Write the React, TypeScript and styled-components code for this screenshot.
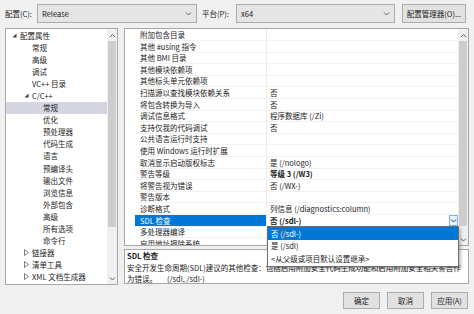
import React from 'react';
import styled, { createGlobalStyle } from 'styled-components';

const GlobalStyle = createGlobalStyle`
  html, body {
    margin: 0;
    padding: 0;
  }
  body {
    background: #f0f0f0;
    font-family: "Noto Sans CJK SC", "Noto Sans", sans-serif;
    font-size: 7.5px;
    color: #1b1b1b;
  }
`;

const Dialog = styled.div`
  width: 474px;
  height: 314px;
  overflow: hidden;
  display: flex;
  flex-direction: column;
  background: #f0f0f0;
`;

const TopBar = styled.div`
  display: flex;
  align-items: center;
  height: 19px;
  padding: 4px 0 0 5px;
`;

const FieldLabel = styled.span<{ $width: number; $gap?: number }>`
  width: ${p => p.$width}px;
  margin-left: ${p => p.$gap || 0}px;
  white-space: nowrap;
`;

const Combo = styled.div<{ $width: number }>`
  box-sizing: border-box;
  width: ${p => p.$width}px;
  height: 19px;
  background: #e5e5e5;
  border: 1px solid #acacac;
  display: flex;
  align-items: center;
  justify-content: space-between;
  padding: 0 4px 0 4px;
`;

const ToolButton = styled.button<{ $width: number; $gap?: number }>`
  box-sizing: border-box;
  width: ${p => p.$width}px;
  height: ${p => (p.$gap ? 19 : 17)}px;
  margin-left: ${p => p.$gap || 0}px;
  padding: 0;
  background: #e1e1e1;
  border: 1px solid #adadad;
  font: inherit;
  color: #1b1b1b;
  white-space: nowrap;
`;

const Main = styled.div`
  display: flex;
  gap: 6px;
  height: 257px;
  padding: 5px 5px 0 5px;
`;

const TreePanel = styled.div`
  box-sizing: border-box;
  width: 113px;
  height: 257px;
  border: 1px solid #a7a7a7;
  background: #fff;
  display: flex;
`;

const TreeList = styled.div`
  flex: 1;
  overflow: hidden;
`;

const TreeRow = styled.div<{ $indent: number; $selected?: boolean }>`
  height: 12.1px;
  display: flex;
  align-items: center;
  padding-left: ${p => p.$indent}px;
  background: ${p => (p.$selected ? '#d6d6e2' : 'transparent')};
  white-space: nowrap;
`;

const Expander = styled.span`
  width: 8px;
  display: flex;
  align-items: center;
`;

const ScrollTrack = styled.div`
  width: 10px;
  background: #f0f0f0;
  display: flex;
  flex-direction: column;
  align-items: center;
`;

const ScrollArrow = styled.div`
  width: 10px;
  height: 12px;
  display: flex;
  align-items: center;
  justify-content: center;
`;

const ScrollThumb = styled.div<{ $size: number }>`
  width: 8px;
  height: ${p => p.$size}px;
  background: #cdcdcd;
`;

const Spacer = styled.div`
  flex: 1;
`;

const RightCol = styled.div`
  position: relative;
  width: 345px;
  display: flex;
  flex-direction: column;
  gap: 3px;
`;

const GridPanel = styled.div`
  box-sizing: border-box;
  height: 218px;
  border: 1px solid #a7a7a7;
  background: #fff;
  display: flex;
`;

const GridBody = styled.div`
  flex: 1;
  overflow: hidden;
`;

const GridRow = styled.div`
  display: grid;
  grid-template-columns: 10px 132px 1fr;
  height: 11.6px;
`;

const Gutter = styled.div`
  background: #fff;
`;

const NameCell = styled.div<{ $selected?: boolean }>`
  box-sizing: border-box;
  padding-left: 5px;
  display: flex;
  align-items: center;
  white-space: nowrap;
  border-bottom: 1px solid #f2f2f2;
  border-right: 1px solid #ececec;
  background: ${p => (p.$selected ? '#0078d7' : 'transparent')};
  color: ${p => (p.$selected ? '#fff' : 'inherit')};
`;

const ValueCell = styled.div<{ $bold?: boolean }>`
  box-sizing: border-box;
  padding-left: 3px;
  display: flex;
  align-items: center;
  justify-content: space-between;
  white-space: nowrap;
  border-bottom: 1px solid #f2f2f2;
  font-weight: ${p => (p.$bold ? 700 : 400)};
`;

const DropButton = styled.div`
  box-sizing: border-box;
  width: 9px;
  height: 11px;
  border: 1px solid #7eb4ea;
  background: #e5f1fb;
  display: flex;
  align-items: center;
  justify-content: center;
`;

const DescPanel = styled.div`
  box-sizing: border-box;
  height: 35px;
  border: 1px solid #a7a7a7;
  background: #fff;
  padding: 0 0 0 2px;
  overflow: hidden;
  white-space: nowrap;
`;

const DescTitle = styled.div`
  font-weight: 700;
  line-height: 12px;
  margin-bottom: 1px;
`;

const DescLine = styled.div`
  line-height: 10.5px;
`;

const Switch = styled.span`
  margin-left: 10px;
`;

const DropList = styled.div`
  position: absolute;
  left: 143px;
  top: 198px;
  box-sizing: border-box;
  width: 192px;
  height: 41px;
  background: #fff;
  border: 1px solid #6e6e6e;
  box-shadow: 2px 2px 3px rgba(0, 0, 0, 0.25);
  z-index: 2;
`;

const DropItem = styled.div<{ $active?: boolean }>`
  height: 12.5px;
  display: flex;
  align-items: center;
  padding-left: 3px;
  background: ${p => (p.$active ? '#0078d7' : 'transparent')};
  color: ${p => (p.$active ? '#fff' : 'inherit')};
  white-space: nowrap;
`;

const Footer = styled.div`
  display: flex;
  justify-content: flex-end;
  gap: 7px;
  padding: 7px 6px 0 0;
`;

const Chevron = ({ up, color = '#606060' }: { up?: boolean; color?: string }) => (
  <svg width="7" height="5" viewBox="0 0 7 5">
    <polyline
      points={up ? '1,4 3.5,1.5 6,4' : '1,1.5 3.5,4 6,1.5'}
      fill="none"
      stroke={color}
      strokeWidth="1"
    />
  </svg>
);

const Arrow = ({ open }: { open: boolean }) =>
  open ? (
    <svg width="5" height="5" viewBox="0 0 5 5">
      <polygon points="4.5,0.5 4.5,4.5 0.5,4.5" fill="#3c3c3c" />
    </svg>
  ) : (
    <svg width="5" height="7" viewBox="0 0 5 7">
      <polygon points="0.5,0.5 4.5,3.5 0.5,6.5" fill="none" stroke="#707070" strokeWidth="0.9" />
    </svg>
  );

type TreeItem = { label: string; level: number; open?: boolean; selected?: boolean };

const tree: TreeItem[] = [
  { label: '配置属性', level: 0, open: true },
  { label: '常规', level: 1 },
  { label: '高级', level: 1 },
  { label: '调试', level: 1 },
  { label: 'VC++ 目录', level: 1 },
  { label: 'C/C++', level: 1, open: true },
  { label: '常规', level: 2, selected: true },
  { label: '优化', level: 2 },
  { label: '预处理器', level: 2 },
  { label: '代码生成', level: 2 },
  { label: '语言', level: 2 },
  { label: '预编译头', level: 2 },
  { label: '输出文件', level: 2 },
  { label: '浏览信息', level: 2 },
  { label: '外部包含', level: 2 },
  { label: '高级', level: 2 },
  { label: '所有选项', level: 2 },
  { label: '命令行', level: 2 },
  { label: '链接器', level: 1, open: false },
  { label: '清单工具', level: 1, open: false },
  { label: 'XML 文档生成器', level: 1, open: false },
];

const indents = [6, 18, 29];

type Prop = { name: string; value?: string; bold?: boolean; selected?: boolean };

const props: Prop[] = [
  { name: '附加包含目录' },
  { name: '其他 #using 指令' },
  { name: '其他 BMI 目录' },
  { name: '其他模块依赖项' },
  { name: '其他标头单元依赖项' },
  { name: '扫描源以查找模块依赖关系', value: '否' },
  { name: '将包含转换为导入', value: '否' },
  { name: '调试信息格式', value: '程序数据库 (/Zi)' },
  { name: '支持仅我的代码调试', value: '否' },
  { name: '公共语言运行时支持' },
  { name: '使用 Windows 运行时扩展' },
  { name: '取消显示启动版权标志', value: '是 (/nologo)' },
  { name: '警告等级', value: '等级 3 (/W3)', bold: true },
  { name: '将警告视为错误', value: '否 (/WX-)' },
  { name: '警告版本' },
  { name: '诊断格式', value: '列信息 (/diagnostics:column)' },
  { name: 'SDL 检查', value: '否 (/sdl-)', bold: true, selected: true },
  { name: '多处理器编译' },
  { name: '启用地址擦除系统' },
];

const options = ['否 (/sdl-)', '是 (/sdl)', '<从父级或项目默认设置继承>'];

const ScrollBar = ({ thumb }: { thumb: number }) => (
  <ScrollTrack>
    <ScrollArrow>
      <Chevron up />
    </ScrollArrow>
    <ScrollThumb $size={thumb} />
    <Spacer />
    <ScrollArrow>
      <Chevron />
    </ScrollArrow>
  </ScrollTrack>
);

export default function App() {
  return (
    <Dialog>
      <GlobalStyle />
      <TopBar>
        <FieldLabel $width={32}>配置(C):</FieldLabel>
        <Combo $width={160}>
          <span>Release</span>
          <Chevron />
        </Combo>
        <FieldLabel $width={34} $gap={5}>平台(P):</FieldLabel>
        <Combo $width={159}>
          <span>x64</span>
          <Chevron />
        </Combo>
        <ToolButton $width={64} $gap={7}>配置管理器(O)...</ToolButton>
      </TopBar>

      <Main>
        <TreePanel>
          <TreeList>
            {tree.map((item, i) => (
              <TreeRow key={i} $indent={indents[item.level]} $selected={item.selected}>
                <Expander>{item.open !== undefined && <Arrow open={item.open} />}</Expander>
                {item.label}
              </TreeRow>
            ))}
          </TreeList>
          <ScrollBar thumb={186} />
        </TreePanel>

        <RightCol>
          <GridPanel>
            <GridBody>
              {props.map((p, i) => (
                <GridRow key={i}>
                  <Gutter />
                  <NameCell $selected={p.selected}>{p.name}</NameCell>
                  <ValueCell $bold={p.bold}>
                    <span>{p.value}</span>
                    {p.selected && (
                      <DropButton>
                        <Chevron color="#404040" />
                      </DropButton>
                    )}
                  </ValueCell>
                </GridRow>
              ))}
            </GridBody>
            <ScrollBar thumb={185} />
          </GridPanel>

          <DescPanel>
            <DescTitle>SDL 检查</DescTitle>
            <DescLine>安全开发生命周期(SDL)建议的其他检查：包括启用附加安全代码生成功能和启用附加安全相关警告作</DescLine>
            <DescLine>
              为错误。<Switch>(/sdl, /sdl-)</Switch>
            </DescLine>
          </DescPanel>

          <DropList>
            {options.map((o, i) => (
              <DropItem key={i} $active={i === 0}>
                {o}
              </DropItem>
            ))}
          </DropList>
        </RightCol>
      </Main>

      <Footer>
        <ToolButton $width={37}>确定</ToolButton>
        <ToolButton $width={37}>取消</ToolButton>
        <ToolButton $width={37}>应用(A)</ToolButton>
      </Footer>
    </Dialog>
  );
}
